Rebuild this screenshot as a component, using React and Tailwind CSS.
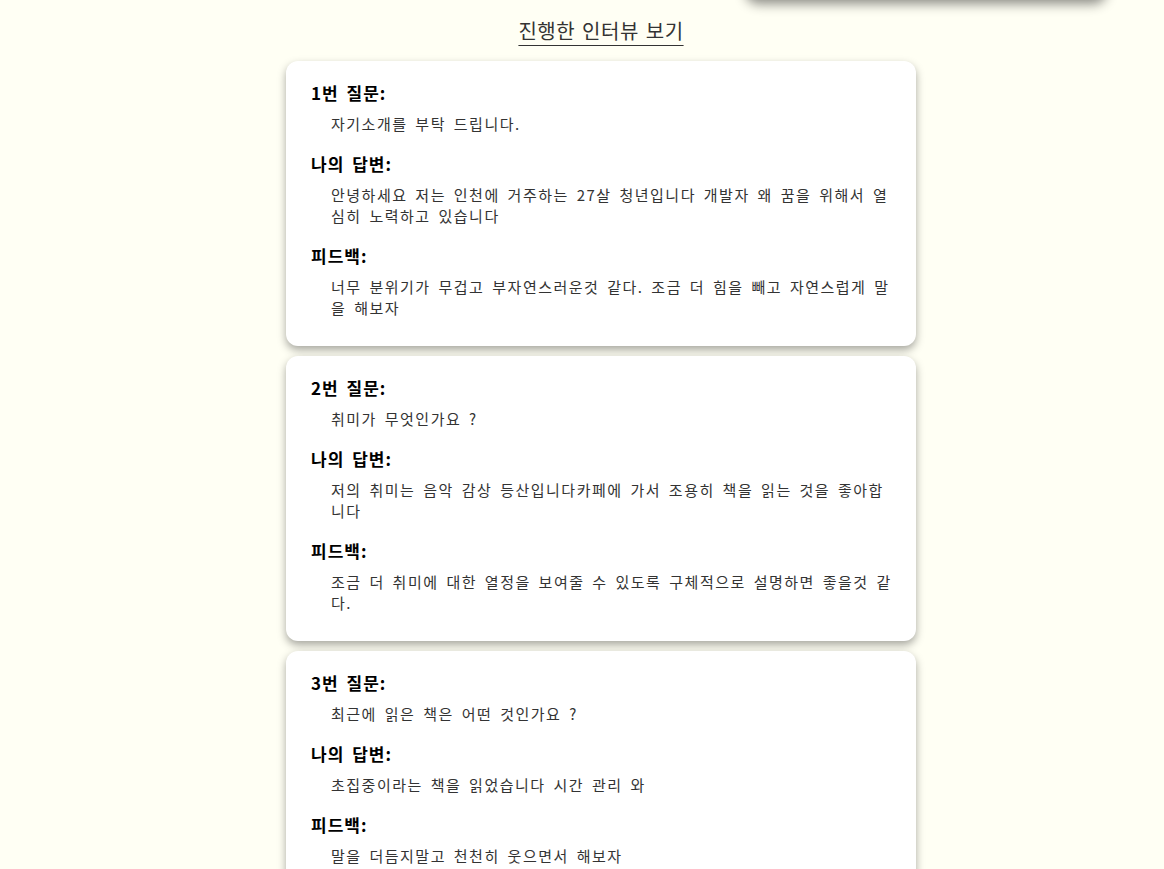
import React from 'react';

const interviews = [
  {
    no: 1,
    question: '자기소개를 부탁 드립니다.',
    answer: '안녕하세요 저는 인천에 거주하는 27살 청년입니다 개발자 왜 꿈을 위해서 열심히 노력하고 있습니다',
    feedback: '너무 분위기가 무겁고 부자연스러운것 같다. 조금 더 힘을 빼고 자연스럽게 말을 해보자',
  },
  {
    no: 2,
    question: '취미가 무엇인가요 ?',
    answer: '저의 취미는 음악 감상 등산입니다카페에 가서 조용히 책을 읽는 것을 좋아합니다',
    feedback: '조금 더 취미에 대한 열정을 보여줄 수 있도록 구체적으로 설명하면 좋을것 같다.',
  },
  {
    no: 3,
    question: '최근에 읽은 책은 어떤 것인가요 ?',
    answer: '초집중이라는 책을 읽었습니다 시간 관리 와',
    feedback: '말을 더듬지말고 천천히 웃으면서 해보자',
  },
];

const Section = ({ title, text }) => (
  <div>
    <h3 className="text-[17px] leading-[24px] font-bold text-black tracking-[1px] [word-spacing:3px]">{title}</h3>
    <p className="mt-[8px] pl-[20px] text-[15px] leading-[21px] text-[#333] tracking-[1.5px] [word-spacing:3px]">{text}</p>
  </div>
);

const InterviewCard = ({ item }) => (
  <div className="w-[630px] rounded-[12px] bg-white pl-[25px] pr-[21px] pt-[20px] pb-[28px] shadow-[0_4px_8px_rgba(0,0,0,0.35)] flex flex-col gap-[18px]">
    <Section title={`${item.no}번 질문:`} text={item.question} />
    <Section title="나의 답변:" text={item.answer} />
    <Section title="피드백:" text={item.feedback} />
  </div>
);

export default function App() {
  return (
    <div
      className="relative min-h-screen overflow-hidden bg-[#fffff4] pl-[38px]"
      style={{ fontFamily: '"Noto Sans CJK KR", "Noto Sans", sans-serif' }}
    >
      {/* menu panel above the fold, only its shadow shows */}
      <div className="absolute left-[745px] top-[-120px] h-[120px] w-[362px] rounded-[14px] bg-white shadow-[0_4px_12px_rgba(0,0,0,0.45)]" />

      <div className="flex flex-col items-center pt-[17px]">
        <h2 className="text-[20px] leading-[28px] text-[#333] tracking-[0.5px] [word-spacing:2px] underline underline-offset-[6px] decoration-[1px]">
          진행한 인터뷰 보기
        </h2>
        <div className="mt-[16px] flex flex-col gap-[10px]">
          {interviews.map((item) => (
            <InterviewCard key={item.no} item={item} />
          ))}
        </div>
      </div>
    </div>
  );
}
